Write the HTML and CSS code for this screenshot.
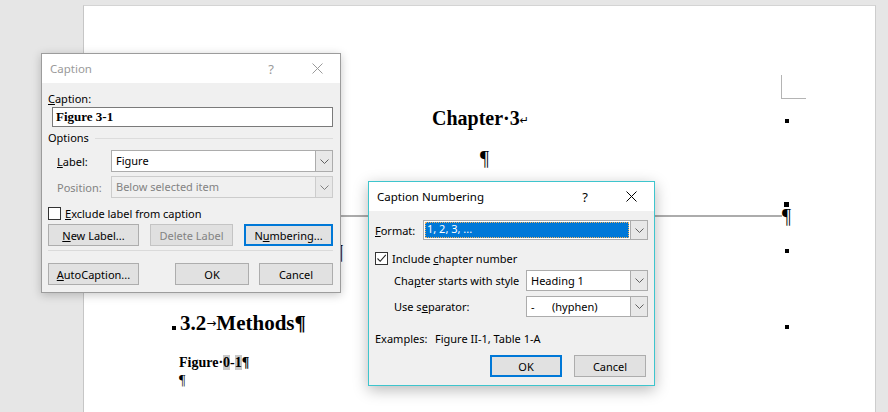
FILE: index.html
```html
<!DOCTYPE html>
<html lang="en">
<head>
  <meta charset="UTF-8">
  <meta name="viewport" content="width=device-width, initial-scale=1.0">
  <title>Caption</title>
  <link rel="stylesheet" href="styles.css">
</head>
<body>
  <div class="page">
    <div class="corner"></div>
    <span class="mark mark-1"></span>
    <span class="mark mark-2"></span>
    <span class="mark mark-3"></span>
    <span class="mark mark-4"></span>

    <p class="chapter">Chapter·3<span class="small">↵</span></p>
    <p class="para para-center">¶</p>
    <p class="rule-row"><span class="rule"></span>¶</p>
    <p class="para para-left">¶</p>
    <p class="methods"><span class="keep"></span>3.2<span class="tab">→</span>Methods¶</p>
    <p class="figure">Figure·<span class="field">0</span>-<span class="field">1</span>¶</p>
    <p class="para para-fig">¶</p>
  </div>

  <!-- Caption dialog (inactive) -->
  <div class="dialog caption-dialog">
    <div class="titlebar inactive">
      <span class="title">Caption</span>
      <span class="help">?</span>
      <span class="close">
        <svg width="11" height="11" viewBox="0 0 11 11"><path d="M0.5 0.5 L10.5 10.5 M10.5 0.5 L0.5 10.5" stroke="currentColor" stroke-width="1" fill="none"/></svg>
      </span>
    </div>
    <div class="dialog-body">
      <div class="field-label"><u>C</u>aption:</div>
      <div class="caption-input">Figure 3-1</div>

      <div class="legend"><span>Options</span><span class="legend-line"></span></div>

      <div class="row indent">
        <span class="row-label"><u>L</u>abel:</span>
        <div class="select wide">
          <span class="select-value">Figure</span>
          <span class="select-arrow"><svg width="9" height="5" viewBox="0 0 9 5"><path d="M0.5 0.5 L4.5 4.5 L8.5 0.5" stroke="#606060" fill="none"/></svg></span>
        </div>
      </div>
      <div class="row indent gap">
        <span class="row-label disabled">Position:</span>
        <div class="select wide is-disabled">
          <span class="select-value">Below selected item</span>
          <span class="select-arrow"><svg width="9" height="5" viewBox="0 0 9 5"><path d="M0.5 0.5 L4.5 4.5 L8.5 0.5" stroke="#808080" fill="none"/></svg></span>
        </div>
      </div>

      <div class="check-row exclude">
        <span class="checkbox"></span>
        <span><u>E</u>xclude label from caption</span>
      </div>

      <div class="button-row">
        <button class="btn btn-wide"><u>N</u>ew Label...</button>
        <button class="btn btn-delete" disabled>Delete Label</button>
        <button class="btn btn-numbering default">N<u>u</u>mbering...</button>
      </div>
      <div class="separator"></div>
      <div class="button-row bottom">
        <button class="btn btn-wide"><u>A</u>utoCaption...</button>
        <button class="btn btn-ok push">OK</button>
        <button class="btn btn-ok">Cancel</button>
      </div>
    </div>
  </div>

  <!-- Caption Numbering dialog (active) -->
  <div class="dialog numbering-dialog">
    <div class="titlebar">
      <span class="title">Caption Numbering</span>
      <span class="help">?</span>
      <span class="close">
        <svg width="11" height="11" viewBox="0 0 11 11"><path d="M0.5 0.5 L10.5 10.5 M10.5 0.5 L0.5 10.5" stroke="currentColor" stroke-width="1" fill="none"/></svg>
      </span>
    </div>
    <div class="dialog-body numbering-body">
      <div class="row">
        <span class="format-label"><u>F</u>ormat:</span>
        <div class="select format">
          <span class="select-value selected">1, 2, 3, ...</span>
          <span class="select-arrow"><svg width="9" height="5" viewBox="0 0 9 5"><path d="M0.5 0.5 L4.5 4.5 L8.5 0.5" stroke="#606060" fill="none"/></svg></span>
        </div>
      </div>

      <div class="check-row include">
        <span class="checkbox checked">
          <svg width="11" height="11" viewBox="0 0 11 11"><path d="M1.5 5.5 L4.2 8.3 L9.8 1.8" stroke="#222" stroke-width="1.1" fill="none"/></svg>
        </span>
        <span>Include <u>c</u>hapter number</span>
      </div>

      <div class="row chapter-row">
        <span class="style-label">Cha<u>p</u>ter starts with style</span>
        <div class="select narrow">
          <span class="select-value">Heading 1</span>
          <span class="select-arrow"><svg width="9" height="5" viewBox="0 0 9 5"><path d="M0.5 0.5 L4.5 4.5 L8.5 0.5" stroke="#606060" fill="none"/></svg></span>
        </div>
      </div>
      <div class="row separator-row">
        <span class="style-label">Use s<u>e</u>parator:</span>
        <div class="select narrow">
          <span class="select-value"><span class="hyphen">-</span>(hyphen)</span>
          <span class="select-arrow"><svg width="9" height="5" viewBox="0 0 9 5"><path d="M0.5 0.5 L4.5 4.5 L8.5 0.5" stroke="#606060" fill="none"/></svg></span>
        </div>
      </div>

      <div class="examples"><span class="examples-label">Examples:</span>Figure II-1, Table 1-A</div>

      <div class="button-row end">
        <button class="btn btn-small default">OK</button>
        <button class="btn btn-small">Cancel</button>
      </div>
    </div>
  </div>
</body>
</html>
```

FILE: styles.css
```css
* {
  box-sizing: border-box;
}

body {
  margin: 0;
  width: 888px;
  height: 412px;
  overflow: hidden;
  position: relative;
  background: #e6e6e6;
  padding: 5px 0 0 83px;
}

/* document page */
.page {
  position: relative;
  width: 793px;
  height: 420px;
  background: #ffffff;
  border-left: 1px solid #c6c6c6;
  border-top: 1px solid #d4d4d4;
  border-right: 1px solid #cdcdcd;
  padding-top: 100px;
  font-family: "Liberation Serif", "Times New Roman", serif;
  color: #000;
}

.page p {
  margin: 0;
  white-space: nowrap;
}

.corner {
  position: absolute;
  left: 697px;
  top: 69px;
  width: 25px;
  height: 24px;
  border-left: 1px solid #b4b4b4;
  border-bottom: 1px solid #b4b4b4;
}

.mark {
  position: absolute;
  left: 701px;
  width: 4px;
  height: 4px;
  background: #000;
}

.mark-1 { top: 113px; }
.mark-2 { top: 243px; }
.mark-3 { top: 319px; }
.mark-4 { top: 196px; left: 700px; width: 5px; height: 5px; }

.chapter {
  font-size: 20px;
  font-weight: bold;
  line-height: 24px;
  padding-left: 348px;
}

.small {
  font-size: 11px;
  font-weight: normal;
  font-family: "DejaVu Sans", sans-serif;
  vertical-align: 1px;
}

.para {
  font-size: 20px;
  line-height: 24px;
}

.para-center {
  margin-top: 13px !important;
  padding-left: 396px;
}

.rule-row {
  margin-top: 34px !important;
  font-size: 20px;
  line-height: 24px;
  padding-left: 246px;
}

.rule {
  display: inline-block;
  width: 452px;
  height: 2px;
  background: #acacac;
  vertical-align: 6px;
}

.para-left {
  margin-top: 12px !important;
  padding-left: 250px;
}

.methods {
  margin-top: 46px !important;
  font-size: 21px;
  font-weight: bold;
  line-height: 26px;
  padding-left: 88px;
}

.keep {
  display: inline-block;
  width: 4px;
  height: 4px;
  background: #000;
  margin-right: 4px;
}

.tab {
  font-size: 12px;
  font-family: "DejaVu Sans", sans-serif;
  font-weight: normal;
  vertical-align: 3px;
}

.figure {
  margin-top: 18px !important;
  font-size: 14px;
  font-weight: bold;
  line-height: 17px;
  padding-left: 95px;
}

.field {
  background: #c8c8c8;
}

.para-fig {
  margin-top: 1px !important;
  font-size: 14px;
  line-height: 17px;
  padding-left: 95px;
}

/* dialogs */
.dialog {
  position: absolute;
  background: #f0f0f0;
  font-family: "Noto Sans", "Open Sans", sans-serif;
  font-size: 11px;
  color: #000;
  white-space: nowrap;
}

.caption-dialog {
  left: 41px;
  top: 53px;
  width: 300px;
  height: 240px;
  border: 1px solid #9c9c9c;
  box-shadow: 0 2px 9px rgba(0, 0, 0, 0.22);
}

.numbering-dialog {
  left: 368px;
  top: 181px;
  width: 287px;
  height: 205px;
  border: 1px solid #3ec5cd;
  box-shadow: 0 4px 14px rgba(0, 0, 0, 0.28);
}

.titlebar {
  height: 29px;
  background: #ffffff;
  display: flex;
  align-items: center;
  padding-left: 8px;
  font-size: 11.5px;
}

.titlebar .title {
  flex: 1;
}

.titlebar .help {
  width: 20px;
  text-align: center;
  font-size: 13px;
  margin-right: 13px;
}

.titlebar .close {
  width: 46px;
  display: flex;
  justify-content: center;
}

.titlebar.inactive {
  color: #9a9a9a;
}

.dialog-body {
  padding: 7px 7px 0 6px;
}

.field-label {
  line-height: 17px;
}

.caption-input {
  margin-left: 4px;
  height: 20px;
  border: 1px solid #7a7a7a;
  background: #fff;
  font-family: "Liberation Serif", "Times New Roman", serif;
  font-weight: bold;
  font-size: 13px;
  line-height: 18px;
  padding-left: 3px;
}

.legend {
  display: flex;
  align-items: center;
  margin-top: 3px;
  line-height: 16px;
}

.legend-line {
  flex: 1;
  height: 1px;
  background: #dcdcdc;
  margin-left: 6px;
}

.row {
  display: flex;
  align-items: center;
}

.row.indent {
  margin-top: 4px;
  padding-left: 9px;
}

.row-label {
  width: 54px;
}

.disabled {
  color: #838383;
}

.select {
  display: flex;
  height: 22px;
  border: 1px solid #acacac;
  background: #fff;
}

.select.wide {
  width: 222px;
}

.select-value {
  flex: 1;
  padding-left: 4px;
  line-height: 20px;
}

.select-arrow {
  width: 17px;
  border-left: 1px solid #acacac;
  background: #e8e8e8;
  display: flex;
  align-items: center;
  justify-content: center;
}

.select.is-disabled {
  background: #f0f0f0;
  border-color: #cccccc;
  color: #838383;
}

.select.is-disabled .select-arrow {
  border-left-color: #cccccc;
  background: #e8e8e8;
}

.check-row {
  display: flex;
  align-items: center;
  height: 16px;
}

.exclude {
  margin-top: 7px;
}

.checkbox {
  width: 13px;
  height: 13px;
  border: 1px solid #333333;
  background: #fff;
  margin-right: 4px;
  display: flex;
  align-items: center;
  justify-content: center;
}

.button-row {
  display: flex;
  justify-content: space-between;
  margin-top: 3px;
}

.btn {
  height: 22px;
  border: 1px solid #adadad;
  background: #e1e1e1;
  font-family: inherit;
  font-size: 11px;
  color: #000;
  padding: 0;
}

.btn-wide { width: 91px; }
.btn-delete { width: 83px; }
.btn-numbering { width: 89px; }
.btn-ok { width: 74px; }
.btn-small { width: 72px; }

.btn:disabled {
  background: #e0e0e0;
  border-color: #c4c4c4;
  color: #838383;
}

.btn.default {
  border: 2px solid #0078d7;
}

.separator {
  height: 1px;
  background: #dadada;
  margin-top: 4px;
}

.button-row.bottom {
  margin-top: 12px;
  justify-content: flex-start;
  gap: 10px;
}

.push {
  margin-left: auto;
}

/* numbering dialog body */
.numbering-body {
  padding: 9px 6px 0 6px;
}

.format-label {
  width: 48px;
}

.select.format {
  width: 225px;
  height: 20px;
}

.select-value.selected {
  margin: 1px;
  padding-left: 2px;
  line-height: 14px;
  background: #0078d7;
  color: #fff;
  outline: 1px dotted #f2b35c;
  outline-offset: -1px;
}

.include {
  margin-top: 10px;
}

.chapter-row {
  margin-top: 4px;
}

.separator-row {
  margin-top: 5px;
}

.style-label {
  width: 151px;
  padding-left: 19px;
}

.select.narrow {
  width: 122px;
  height: 21px;
}

.select.narrow .select-value {
  line-height: 19px;
}

.hyphen {
  display: inline-block;
  width: 21px;
}

.examples {
  margin-top: 14px;
  line-height: 16px;
}

.examples-label {
  display: inline-block;
  width: 60px;
}

.button-row.end {
  margin-top: 8px;
  justify-content: flex-end;
  gap: 12px;
  padding-right: 2px;
}
```
